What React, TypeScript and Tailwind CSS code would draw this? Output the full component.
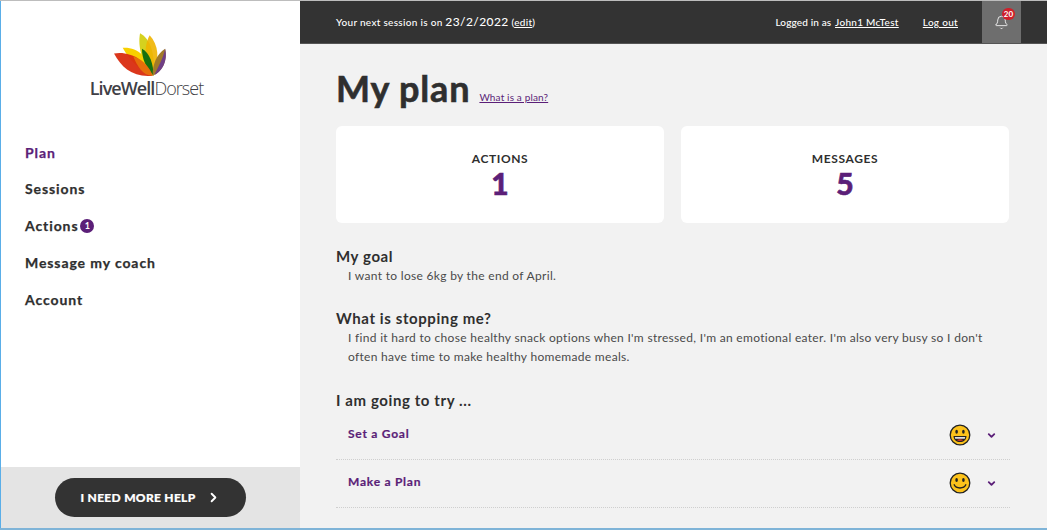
import React from "react";
import { Bell, ChevronRight, ChevronDown } from "lucide-react";

function Logo() {
  return (
    <div className="flex flex-col items-center mr-[8px]">
      <svg width="54" height="45" viewBox="0 0 56 46" className="mr-[12px]">
        <path d="M27 0 C38 6 43 22 41 44 C31 34 24 16 27 0Z" fill="#d3cf12" opacity="0.95" />
        <path d="M37 2 C46 12 48 26 40 44 C32 34 30 14 37 2Z" fill="#f0b400" opacity="0.9" />
        <path d="M9 15 C24 14 36 24 40 44 C26 38 16 28 9 15Z" fill="#f8d000" />
        <path d="M29 16 C37 20 41 32 41 44 C33 36 29 26 29 16Z" fill="#15700f" />
        <path d="M53 16 C56 28 50 40 40 44 C40 32 44 22 53 16Z" fill="#a17a28" />
        <path d="M53 16 C56 28 50 40 42 43 C46 34 51 26 53 16Z" fill="#6f3f86" />
        <path d="M0 21 C16 18 34 28 40 44 C20 46 8 36 0 21Z" fill="#d92c10" opacity="0.95" />
        <path d="M20 24 C30 27 37 35 40 44 C30 44 24 34 20 24Z" fill="#e8820a" opacity="0.75" />
      </svg>
      <div className="text-[18px] leading-[20px] tracking-[-0.95px] font-['Open_Sans',sans-serif] text-[#3f3f46]">
        <span className="font-semibold">LiveWell</span>
        <span className="font-light">Dorset</span>
      </div>
    </div>
  );
}

function Grin() {
  return (
    <svg width="22" height="22" viewBox="0 0 22 22">
      <circle cx="11" cy="11" r="9.8" fill="#fcc21b" stroke="#222" strokeWidth="1.3" />
      <ellipse cx="7.6" cy="7.8" rx="1.3" ry="2" fill="#222" />
      <ellipse cx="14.4" cy="7.8" rx="1.3" ry="2" fill="#222" />
      <path d="M4.5 12 H17.5 C17.3 16 14.5 18 11 18 C7.5 18 4.7 16 4.5 12Z" fill="#222" />
      <path d="M5.8 13 H16.2 L15.8 14.8 H6.2Z" fill="#ddd" />
      <path d="M8 16 C9.5 15 12.5 15 14 16 C13 17.2 9 17.2 8 16Z" fill="#d9342b" />
    </svg>
  );
}

function Smile() {
  return (
    <svg width="22" height="22" viewBox="0 0 22 22">
      <circle cx="11" cy="11" r="9.8" fill="#fcc21b" stroke="#222" strokeWidth="1.3" />
      <ellipse cx="7.6" cy="8" rx="1.3" ry="2" fill="#222" />
      <ellipse cx="14.4" cy="8" rx="1.3" ry="2" fill="#222" />
      <path d="M5.2 12.8 C7 17 15 17 16.8 12.8" fill="none" stroke="#222" strokeWidth="1.4" strokeLinecap="round" />
    </svg>
  );
}

const nav = ["Plan", "Sessions", "Actions", "Message my coach", "Account"];

function Row({ title, face }: { title: string; face: React.ReactNode }) {
  return (
    <div className="h-12 flex items-center pl-3 pr-[13px] border-b border-dotted border-[#cfcfcf]">
      <span className="flex-1 mb-[2px] text-[12px] font-bold tracking-[0.75px] text-[#5b1f78] [-webkit-text-stroke:0.2px_#5b1f78]">{title}</span>
      <span className="flex">{face}</span>
      <ChevronDown size={11} strokeWidth={4} className="ml-[15px] mt-[1px] text-[#5b1f78]" />
    </div>
  );
}

export default function App() {
  return (
    <div className="w-[1047px] h-[530px] overflow-hidden flex flex-col bg-[#f2f2f2] font-['Lato',sans-serif] text-[#2f2f2f]">
      <div className="h-[1px] bg-[#bdbdbd] shrink-0" />
      <div className="flex flex-1 min-h-0">
        <aside className="w-[300px] shrink-0 flex flex-col bg-white border-l-[1px] border-[#5aaee8]">
          <div className="h-[116px] pt-[32px] flex justify-center shrink-0">
            <Logo />
          </div>
          <nav className="flex-1 pl-[24px] pt-[25.7px] text-[14px] font-bold tracking-[0.9px] leading-5 [-webkit-text-stroke:0.25px]">
            {nav.map((n, i) => (
              <div key={n} className={i === 0 ? "h-[36.75px] flex items-start text-[#5b1f78]" : "h-[36.75px] flex items-start"}>
                {n}
                {n === "Actions" && (
                  <span className="ml-[2px] mt-[3px] w-[14px] h-[14px] rounded-full bg-[#5b1f78] text-white text-[9px] tracking-normal leading-[14px] text-center [-webkit-text-stroke:0]">
                    1
                  </span>
                )}
              </div>
            ))}
          </nav>
          <div className="h-[61px] shrink-0 bg-[#e4e4e4] flex justify-center pt-[11px]">
            <button className="w-[191px] h-[39px] rounded-full bg-[#333333] text-white text-[12px] font-black tracking-[0.3px] flex items-center justify-center gap-[11px] pl-[1px] [-webkit-text-stroke:0.2px_white]">
              I NEED MORE HELP
              <ChevronRight size={15} strokeWidth={3} />
            </button>
          </div>
        </aside>
        <main className="flex-1 min-w-0 flex flex-col">
          <header className="h-[43px] shrink-0 bg-[#333333] text-white flex items-center pl-[36px] pr-[26px] text-[10px] font-medium tracking-[0.3px] border-b-[1px] border-[#555]">
            <span>
              Your next session is on <span className="text-[12px] tracking-[0.4px]">23/2/2022</span> (<span className="underline">edit</span>)
            </span>
            <span className="ml-auto tracking-[0.15px]">
              Logged in as <span className="underline ml-[1px] tracking-[0.3px]">John1 McTest</span>
            </span>
            <span className="underline ml-6">Log out</span>
            <div className="relative ml-6 w-[39px] h-[42px] bg-[#6e6e6e] flex items-center justify-center">
              <Bell size={15} strokeWidth={1.3} className="mt-[1px]" />
              <span className="absolute top-[7px] right-[6px] min-w-[13px] h-[12px] rounded-full bg-[#d0202a] text-[8px] font-bold leading-[12px] text-center tracking-normal">
                20
              </span>
            </div>
          </header>
          <div className="flex-1 min-h-0 pl-[36px] pr-[38px]">
            <div className="flex items-baseline gap-[9px] pt-[24px] h-[82px]">
              <h1 className="text-[36px] leading-[40px] font-bold tracking-[0.85px] [-webkit-text-stroke:0.6px]">My plan</h1>
              <a className="text-[10px] tracking-[0.15px] underline text-[#5b1f78] -translate-y-px">What is a plan?</a>
            </div>
            <div className="grid grid-cols-2 gap-[17px]">
              {[
                ["ACTIONS", "1"],
                ["MESSAGES", "5"],
              ].map(([l, v]) => (
                <div key={l} className="h-[97px] bg-white rounded-md flex flex-col items-center pt-[26px]">
                  <div className="text-[12px] leading-[14px] font-bold tracking-[0.6px]">{l}</div>
                  <div className="text-[30px] leading-[34px] font-black text-[#5b1f78] [-webkit-text-stroke:0.6px_#5b1f78]">{v}</div>
                </div>
              ))}
            </div>
            <h2 className="mt-[24px] text-[15px] leading-[18px] font-bold tracking-[0.6px]">My goal</h2>
            <p className="mt-[1px] pl-3 text-[12px] leading-[19.5px] tracking-[0.31px] text-[#4a4a4a]">
              I want to lose 6kg by the end of April.
            </p>
            <h2 className="mt-[23px] text-[15px] leading-[18px] font-bold tracking-[0.6px]">What is stopping me?</h2>
            <p className="mt-[1px] pl-3 text-[12px] leading-[19.5px] tracking-[0.31px] text-[#4a4a4a]">
              I find it hard to chose healthy snack options when I'm stressed, I'm an emotional eater. I'm also very busy so I don't often have time to make healthy homemade meals.
            </p>
            <h2 className="mt-[24px] text-[15px] leading-[18px] font-bold tracking-[0.6px]">I am going to try ...</h2>
            <div className="mt-[3px] mr-[-1px]">
              <Row title="Set a Goal" face={<Grin />} />
              <Row title="Make a Plan" face={<Smile />} />
            </div>
          </div>
        </main>
      </div>
      <div className="h-[2px] bg-[#7fb4d8] shrink-0" />
    </div>
  );
}
